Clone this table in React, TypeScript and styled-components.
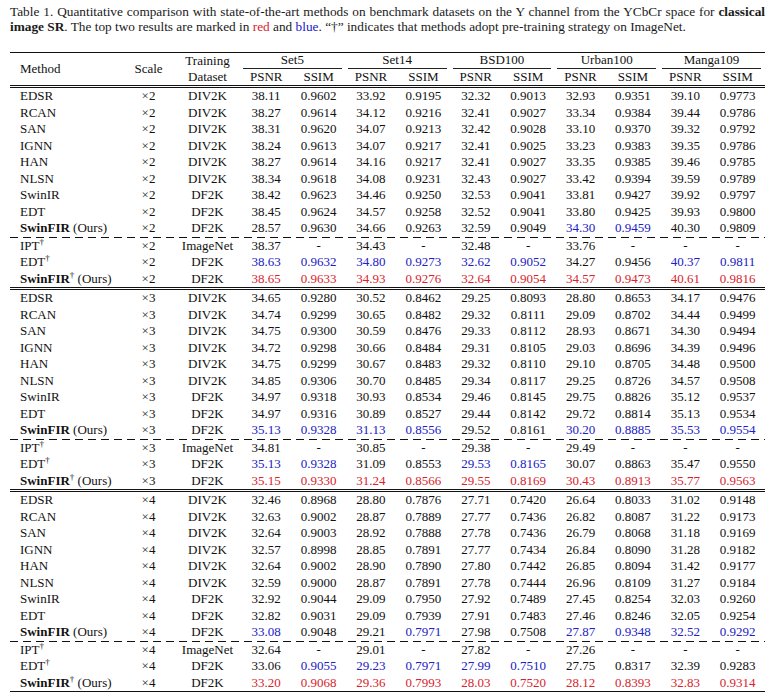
import React from 'react';
import styled, { createGlobalStyle } from 'styled-components';

const Global = createGlobalStyle`
  html, body { margin: 0; padding: 0; background: #fff; }
  body { font-family: "Liberation Serif", "Times New Roman", serif; color: #111; }
`;

const COLS = '112px 53px 65px repeat(10, 52.4px)';

const Page = styled.div`
  width: 770px;
  height: 697px;
  overflow: hidden;
  box-sizing: border-box;
  padding: 5px 5px 0 10px;
`;

const Caption = styled.div`
  width: 755px;
  font-size: 13.3px;
  line-height: 14.5px;
  color: #1a1a1a;
`;

const CapLine = styled.div<{ $justify?: boolean }>`
  text-align: ${(p) => (p.$justify ? 'justify' : 'left')};
  text-align-last: ${(p) => (p.$justify ? 'justify' : 'left')};
`;

const B = styled.b`
  font-weight: 700;
`;

const Tint = styled.span<{ $tone: 'r' | 'b' }>`
  color: ${(p) => (p.$tone === 'r' ? '#d8232c' : '#2020c4')};
`;

const Table = styled.div`
  margin-top: 17.5px;
  width: 755px;
  border-top: 1.5px solid #111;
  border-bottom: 1.5px solid #111;
  font-size: 13px;
`;

const Head = styled.div`
  display: grid;
  grid-template-columns: ${COLS};
  grid-template-rows: 16px 16.5px;
  line-height: 16.5px;
`;

const HeadCell = styled.div<{ $left?: boolean; $span?: boolean }>`
  grid-row: 1 / span 2;
  display: flex;
  align-items: center;
  justify-content: ${(p) => (p.$left ? 'flex-start' : 'center')};
  padding-left: ${(p) => (p.$left ? '10px' : '0')};
  text-align: center;
  padding-top: 1px;
`;

const GroupCell = styled.div`
  grid-column: span 2;
  grid-row: 1;
  margin: 0 3px;
  border-bottom: 1px solid #222;
  box-sizing: border-box;
  text-align: center;
  line-height: 14px;
`;

const SubCell = styled.div`
  grid-row: 2;
  text-align: center;
  line-height: 16px;
`;

const DoubleRule = styled.div`
  height: 1px;
  border-top: 1px solid #111;
  border-bottom: 1px solid #111;
`;

const DashRule = styled.div`
  height: 1px;
  background: repeating-linear-gradient(to right, #111 0 8px, transparent 8px 13px);
`;

const Row = styled.div`
  display: grid;
  grid-template-columns: ${COLS};
  height: 16.5px;
  line-height: 16.5px;
  white-space: nowrap;
`;

const MethodCell = styled.div`
  padding-left: 10px;
`;

const Center = styled.div<{ $tone?: string }>`
  text-align: center;
  color: ${(p) => (p.$tone === 'r' ? '#d8232c' : p.$tone === 'b' ? '#2020c4' : '#111')};
`;

const Times = styled.span`
  color: #333;
`;

const Sup = styled.sup`
  font-size: 9px;
  line-height: 0;
  vertical-align: 0;
  position: relative;
  top: -5px;
`;

type Entry = {
  name: string;
  dag?: boolean;
  ours?: boolean;
  data: string;
  vals: string[];
  tones?: string;
};

const base = (scale: string, rows: string[][], special: { swin: [string[], string]; ipt: string[]; edt: [string[], string]; swinD: string[] }) => {
  const names = ['EDSR', 'RCAN', 'SAN', 'IGNN', 'HAN', 'NLSN', 'SwinIR', 'EDT'];
  const top: Entry[] = rows.map((v, i) => ({ name: names[i], data: i < 6 ? 'DIV2K' : 'DF2K', vals: v }));
  top.push({ name: 'SwinFIR', ours: true, data: 'DF2K', vals: special.swin[0], tones: special.swin[1] });
  const bottom: Entry[] = [
    { name: 'IPT', dag: true, data: 'ImageNet', vals: special.ipt },
    { name: 'EDT', dag: true, data: 'DF2K', vals: special.edt[0], tones: special.edt[1] },
    { name: 'SwinFIR', dag: true, ours: true, data: 'DF2K', vals: special.swinD, tones: 'rrrrrrrrrr' },
  ];
  return { scale, top, bottom };
};

const sections = [
  base(
    '2',
    [
      ['38.11', '0.9602', '33.92', '0.9195', '32.32', '0.9013', '32.93', '0.9351', '39.10', '0.9773'],
      ['38.27', '0.9614', '34.12', '0.9216', '32.41', '0.9027', '33.34', '0.9384', '39.44', '0.9786'],
      ['38.31', '0.9620', '34.07', '0.9213', '32.42', '0.9028', '33.10', '0.9370', '39.32', '0.9792'],
      ['38.24', '0.9613', '34.07', '0.9217', '32.41', '0.9025', '33.23', '0.9383', '39.35', '0.9786'],
      ['38.27', '0.9614', '34.16', '0.9217', '32.41', '0.9027', '33.35', '0.9385', '39.46', '0.9785'],
      ['38.34', '0.9618', '34.08', '0.9231', '32.43', '0.9027', '33.42', '0.9394', '39.59', '0.9789'],
      ['38.42', '0.9623', '34.46', '0.9250', '32.53', '0.9041', '33.81', '0.9427', '39.92', '0.9797'],
      ['38.45', '0.9624', '34.57', '0.9258', '32.52', '0.9041', '33.80', '0.9425', '39.93', '0.9800'],
    ],
    {
      swin: [['28.57', '0.9630', '34.66', '0.9263', '32.59', '0.9049', '34.30', '0.9459', '40.30', '0.9809'], 'kkkkkkbbkk'],
      ipt: ['38.37', '-', '34.43', '-', '32.48', '-', '33.76', '-', '-', '-'],
      edt: [['38.63', '0.9632', '34.80', '0.9273', '32.62', '0.9052', '34.27', '0.9456', '40.37', '0.9811'], 'bbbbbbkkbb'],
      swinD: ['38.65', '0.9633', '34.93', '0.9276', '32.64', '0.9054', '34.57', '0.9473', '40.61', '0.9816'],
    }
  ),
  base(
    '3',
    [
      ['34.65', '0.9280', '30.52', '0.8462', '29.25', '0.8093', '28.80', '0.8653', '34.17', '0.9476'],
      ['34.74', '0.9299', '30.65', '0.8482', '29.32', '0.8111', '29.09', '0.8702', '34.44', '0.9499'],
      ['34.75', '0.9300', '30.59', '0.8476', '29.33', '0.8112', '28.93', '0.8671', '34.30', '0.9494'],
      ['34.72', '0.9298', '30.66', '0.8484', '29.31', '0.8105', '29.03', '0.8696', '34.39', '0.9496'],
      ['34.75', '0.9299', '30.67', '0.8483', '29.32', '0.8110', '29.10', '0.8705', '34.48', '0.9500'],
      ['34.85', '0.9306', '30.70', '0.8485', '29.34', '0.8117', '29.25', '0.8726', '34.57', '0.9508'],
      ['34.97', '0.9318', '30.93', '0.8534', '29.46', '0.8145', '29.75', '0.8826', '35.12', '0.9537'],
      ['34.97', '0.9316', '30.89', '0.8527', '29.44', '0.8142', '29.72', '0.8814', '35.13', '0.9534'],
    ],
    {
      swin: [['35.13', '0.9328', '31.13', '0.8556', '29.52', '0.8161', '30.20', '0.8885', '35.53', '0.9554'], 'bbbbkkbbbb'],
      ipt: ['34.81', '-', '30.85', '-', '29.38', '-', '29.49', '-', '-', '-'],
      edt: [['35.13', '0.9328', '31.09', '0.8553', '29.53', '0.8165', '30.07', '0.8863', '35.47', '0.9550'], 'bbkkbbkkkk'],
      swinD: ['35.15', '0.9330', '31.24', '0.8566', '29.55', '0.8169', '30.43', '0.8913', '35.77', '0.9563'],
    }
  ),
  base(
    '4',
    [
      ['32.46', '0.8968', '28.80', '0.7876', '27.71', '0.7420', '26.64', '0.8033', '31.02', '0.9148'],
      ['32.63', '0.9002', '28.87', '0.7889', '27.77', '0.7436', '26.82', '0.8087', '31.22', '0.9173'],
      ['32.64', '0.9003', '28.92', '0.7888', '27.78', '0.7436', '26.79', '0.8068', '31.18', '0.9169'],
      ['32.57', '0.8998', '28.85', '0.7891', '27.77', '0.7434', '26.84', '0.8090', '31.28', '0.9182'],
      ['32.64', '0.9002', '28.90', '0.7890', '27.80', '0.7442', '26.85', '0.8094', '31.42', '0.9177'],
      ['32.59', '0.9000', '28.87', '0.7891', '27.78', '0.7444', '26.96', '0.8109', '31.27', '0.9184'],
      ['32.92', '0.9044', '29.09', '0.7950', '27.92', '0.7489', '27.45', '0.8254', '32.03', '0.9260'],
      ['32.82', '0.9031', '29.09', '0.7939', '27.91', '0.7483', '27.46', '0.8246', '32.05', '0.9254'],
    ],
    {
      swin: [['33.08', '0.9048', '29.21', '0.7971', '27.98', '0.7508', '27.87', '0.9348', '32.52', '0.9292'], 'bkkbkkbbbb'],
      ipt: ['32.64', '-', '29.01', '-', '27.82', '-', '27.26', '-', '-', '-'],
      edt: [['33.06', '0.9055', '29.23', '0.7971', '27.99', '0.7510', '27.75', '0.8317', '32.39', '0.9283'], 'kbbbbbkkkk'],
      swinD: ['33.20', '0.9068', '29.36', '0.7993', '28.03', '0.7520', '28.12', '0.8393', '32.83', '0.9314'],
    }
  ),
];

const Method: React.FC<{ e: Entry }> = ({ e }) => (
  <MethodCell>
    {e.ours ? <B>{e.name}</B> : e.name}
    {e.dag && <Sup>†</Sup>}
    {e.ours && ' (Ours)'}
  </MethodCell>
);

const DataRow: React.FC<{ e: Entry; scale: string }> = ({ e, scale }) => (
  <Row>
    <Method e={e} />
    <Center>
      <Times>×</Times>
      {scale}
    </Center>
    <Center>{e.data}</Center>
    {e.vals.map((v, i) => (
      <Center key={i} $tone={e.tones ? e.tones[i] : 'k'}>
        {v}
      </Center>
    ))}
  </Row>
);

const groups = ['Set5', 'Set14', 'BSD100', 'Urban100', 'Manga109'];

export default function App() {
  return (
    <Page>
      <Global />
      <Caption>
        <CapLine $justify>
          Table 1. Quantitative comparison with state-of-the-art methods on benchmark datasets on the Y channel from the
          YCbCr space for <B>classical</B>
        </CapLine>
        <CapLine>
          <B>image SR</B>. The top two results are marked in <Tint $tone="r">red</Tint> and{' '}
          <Tint $tone="b">blue</Tint>. “†” indicates that methods adopt pre-training strategy on ImageNet.
        </CapLine>
      </Caption>
      <Table>
        <Head>
          <HeadCell $left>Method</HeadCell>
          <HeadCell>Scale</HeadCell>
          <HeadCell>
            Training
            <br />
            Dataset
          </HeadCell>
          {groups.map((g) => (
            <GroupCell key={g}>{g}</GroupCell>
          ))}
          {groups.map((g) => (
            <React.Fragment key={g}>
              <SubCell>PSNR</SubCell>
              <SubCell>SSIM</SubCell>
            </React.Fragment>
          ))}
        </Head>
        <DoubleRule />
        {sections.map((s, si) => (
          <React.Fragment key={s.scale}>
            {s.top.map((e, i) => (
              <DataRow key={i} e={e} scale={s.scale} />
            ))}
            <DashRule />
            {s.bottom.map((e, i) => (
              <DataRow key={i} e={e} scale={s.scale} />
            ))}
            {si < sections.length - 1 && <DoubleRule />}
          </React.Fragment>
        ))}
      </Table>
    </Page>
  );
}
